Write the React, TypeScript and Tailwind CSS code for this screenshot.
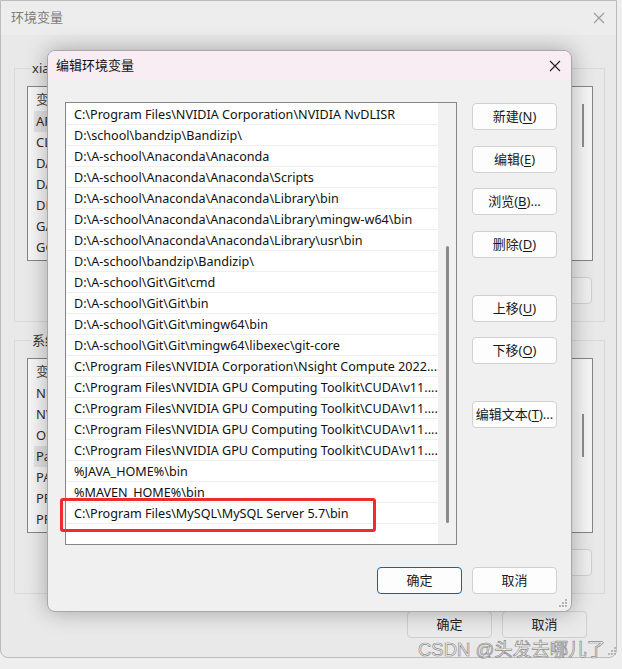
import React from "react";

const paths = [
  "C:\\Program Files\\NVIDIA Corporation\\NVIDIA NvDLISR",
  "D:\\school\\bandzip\\Bandizip\\",
  "D:\\A-school\\Anaconda\\Anaconda",
  "D:\\A-school\\Anaconda\\Anaconda\\Scripts",
  "D:\\A-school\\Anaconda\\Anaconda\\Library\\bin",
  "D:\\A-school\\Anaconda\\Anaconda\\Library\\mingw-w64\\bin",
  "D:\\A-school\\Anaconda\\Anaconda\\Library\\usr\\bin",
  "D:\\A-school\\bandzip\\Bandizip\\",
  "D:\\A-school\\Git\\Git\\cmd",
  "D:\\A-school\\Git\\Git\\bin",
  "D:\\A-school\\Git\\Git\\mingw64\\bin",
  "D:\\A-school\\Git\\Git\\mingw64\\libexec\\git-core",
  "C:\\Program Files\\NVIDIA Corporation\\Nsight Compute 2022....",
  "C:\\Program Files\\NVIDIA GPU Computing Toolkit\\CUDA\\v11....",
  "C:\\Program Files\\NVIDIA GPU Computing Toolkit\\CUDA\\v11....",
  "C:\\Program Files\\NVIDIA GPU Computing Toolkit\\CUDA\\v11....",
  "C:\\Program Files\\NVIDIA GPU Computing Toolkit\\CUDA\\v11....",
  "%JAVA_HOME%\\bin",
  "%MAVEN_HOME%\\bin",
  "C:\\Program Files\\MySQL\\MySQL Server 5.7\\bin",
];

const userVars = ["APPDATA_DIR", "CLASSPATH", "DASHSCOPE_KEY", "DATA_HOME", "DEVECO_HOME", "GATSBY_HOME", "GOPATH"];
const sysVars = ["NUMBER_OF_PROCESSORS", "NVCUDASAMPLES_ROOT", "OS", "Path", "PATHEXT", "PROCESSOR_ARCHITECTURE", "PROCESSOR_IDENTIFIER"];

function CloseIcon({ color }: { color: string }) {
  return (
    <svg width="12" height="12" viewBox="0 0 12 12">
      <path d="M1 1L11 11M11 1L1 11" stroke={color} strokeWidth="1.1" />
    </svg>
  );
}

function Grip() {
  return (
    <svg width="8" height="8" viewBox="0 0 8 8" fill="#b5b5b5">
      <rect x="6" y="0" width="2" height="2" />
      <rect x="3" y="3" width="2" height="2" />
      <rect x="6" y="3" width="2" height="2" />
      <rect x="0" y="6" width="2" height="2" />
      <rect x="3" y="6" width="2" height="2" />
      <rect x="6" y="6" width="2" height="2" />
    </svg>
  );
}

function Btn({ label, mn, tail, primary }: { label: string; mn?: string; tail?: string; primary?: boolean }) {
  return (
    <div
      className={`w-[85px] h-[27px] shrink-0 flex items-center justify-center rounded-[4px] bg-[#fdfdfd] text-[13px] text-[#1a1a1a] ${
        primary ? "border border-[#0067c0]" : "border border-[#d1d1d1]"
      }`}
    >
      <span>
        {label}
        {mn && (
          <>
            (<span className="underline underline-offset-2">{mn}</span>){tail}
          </>
        )}
      </span>
    </div>
  );
}

function BgList({ names, sel, thumbTop }: { names: string[]; sel: number; thumbTop: string }) {
  return (
    <div className="relative h-[175px] border border-[#858585] bg-[#f6f6f6] pl-[6px] pt-[2px]">
      <div className="h-[22px] w-[30px] overflow-hidden flex items-center pl-[2px] text-[13px] text-[#444]">变量</div>
      {names.map((n, i) => (
        <div
          key={n}
          className={`h-[21px] w-[30px] overflow-hidden whitespace-nowrap flex items-center pl-[2px] text-[13px] text-[#3b2a1e] ${i === sel ? "bg-[#e2e2e2]" : ""}`}
        >
          {n}
        </div>
      ))}
      <div className={`absolute right-[8px] ${thumbTop} w-[2px] h-[43px] bg-[#8e8e8e]`} />
    </div>
  );
}

function BgGroup({ title, names, sel, thumbTop }: { title: string; names: string[]; sel: number; thumbTop: string }) {
  return (
    <fieldset className="border border-[#d9d9d9] pl-[12px] pr-[11px] pb-[17px]">
      <legend className="ml-[4px] px-[1px] text-[13px] leading-[18px] text-[#333]">{title}</legend>
      <div className="mt-[9px]">
        <BgList names={names} sel={sel} thumbTop={thumbTop} />
      </div>
      <div className="mt-[16px] flex justify-end gap-[10px] pr-[1px]">
        <div className="w-[85px] h-[27px] rounded-[4px] border border-[#cfcfcf] bg-[#efefef]" />
        <div className="w-[85px] h-[27px] rounded-[4px] border border-[#cfcfcf] bg-[#efefef]" />
        <div className="w-[85px] h-[27px] rounded-[4px] border border-[#cfcfcf] bg-[#efefef]" />
      </div>
    </fieldset>
  );
}

export default function App() {
  return (
    <div className="relative w-[622px] h-[669px] overflow-hidden bg-[#eeeeee] font-['Noto_Sans','Noto_Sans_CJK_SC',sans-serif]">
      {/* background window (disabled while modal is up) */}
      <div className="w-[617px] h-[658px] flex flex-col border border-[#bcbcbc] rounded-b-[8px] bg-[#e9e9e9]">
        <div className="h-[34px] shrink-0 flex items-center justify-between pl-[10px] pr-[11px] bg-[#ededed]">
          <span className="text-[13px] text-[#7d7d7d]">环境变量</span>
          <CloseIcon color="#9a9a9a" />
        </div>
        <div className="flex flex-col pl-[13px] pr-[11px] pt-[24px]">
          <BgGroup title="xian" names={userVars} sel={0} thumbTop="top-[17px]" />
          <div className="mt-[9px]">
            <BgGroup title="系统" names={sysVars} sel={3} thumbTop="top-[55px]" />
          </div>
          <div className="mt-[17px] flex justify-end gap-[10px] pr-[18px]">
            <div className="w-[85px] h-[27px] flex items-center justify-center rounded-[4px] border border-[#cfcfcf] bg-[#eaeaea] text-[13px] text-[#222]">确定</div>
            <div className="w-[85px] h-[27px] flex items-center justify-center rounded-[4px] border border-[#cfcfcf] bg-[#eaeaea] text-[13px] text-[#222]">取消</div>
          </div>
        </div>
      </div>
      <div className="absolute left-[608px] top-[647px]">
        <Grip />
      </div>

      {/* modal dialog */}
      <div className="absolute left-[47px] top-[50px] w-[525px] h-[562px] flex flex-col rounded-[8px] border border-[#a8a8a8] bg-[#f0f0f0] shadow-[0_0_22px_rgba(0,0,0,0.3)] overflow-hidden">
        <div className="h-[29px] shrink-0 flex items-center justify-between pl-[8px] pr-[10px] bg-[#f8edf3]">
          <span className="text-[13px] text-[#111]">编辑环境变量</span>
          <CloseIcon color="#222" />
        </div>
        <div className="flex pl-[17px] pr-[14px] pt-[22px]">
          <div className="w-[392px] h-[443px] shrink-0 flex border border-[#868686] bg-white">
            <div className="w-[372px] flex flex-col pt-[1px]">
              {paths.map((p, i) => (
                <div
                  key={i}
                  className="h-[21px] shrink-0 flex items-center pl-[8px] pt-[2px] border-b border-[#efefef] text-[12.6px] text-[#111] whitespace-nowrap overflow-hidden"
                >
                  {p}
                </div>
              ))}
            </div>
            <div className="relative flex-1 bg-[#f1f1f1]">
              <div className="absolute left-[8px] top-[143px] w-[3px] h-[277px] rounded-full bg-[#8a8a8a]" />
            </div>
          </div>
          <div className="ml-[15px] flex flex-col pt-[1px]">
            <Btn label="新建" mn="N" />
            <div className="mt-[16px]"><Btn label="编辑" mn="E" /></div>
            <div className="mt-[15px]"><Btn label="浏览" mn="B" tail="..." /></div>
            <div className="mt-[16px]"><Btn label="删除" mn="D" /></div>
            <div className="mt-[37px]"><Btn label="上移" mn="U" /></div>
            <div className="mt-[15px]"><Btn label="下移" mn="O" /></div>
            <div className="mt-[37px]"><Btn label="编辑文本" mn="T" tail="..." /></div>
          </div>
        </div>
        <div className="mt-[22px] flex justify-end gap-[10px] pr-[14px]">
          <Btn label="确定" primary />
          <Btn label="取消" />
        </div>
        <div className="absolute right-[4px] bottom-[4px]">
          <Grip />
        </div>
      </div>

      {/* red highlight around the new entry */}
      <div className="absolute left-[60px] top-[498px] w-[316px] h-[34px] rounded-[3px] border-[3px] border-[#ef2b2b]" />

      {/* watermark */}
      <div className="absolute left-[418px] top-[637px] text-[18.5px] leading-[26px] text-[#fafafa] [-webkit-text-stroke:0.7px_#8c8c8c] font-['Liberation_Sans','Noto_Sans_CJK_SC',sans-serif] whitespace-nowrap">
        CSDN @头发去哪儿了
      </div>
    </div>
  );
}
